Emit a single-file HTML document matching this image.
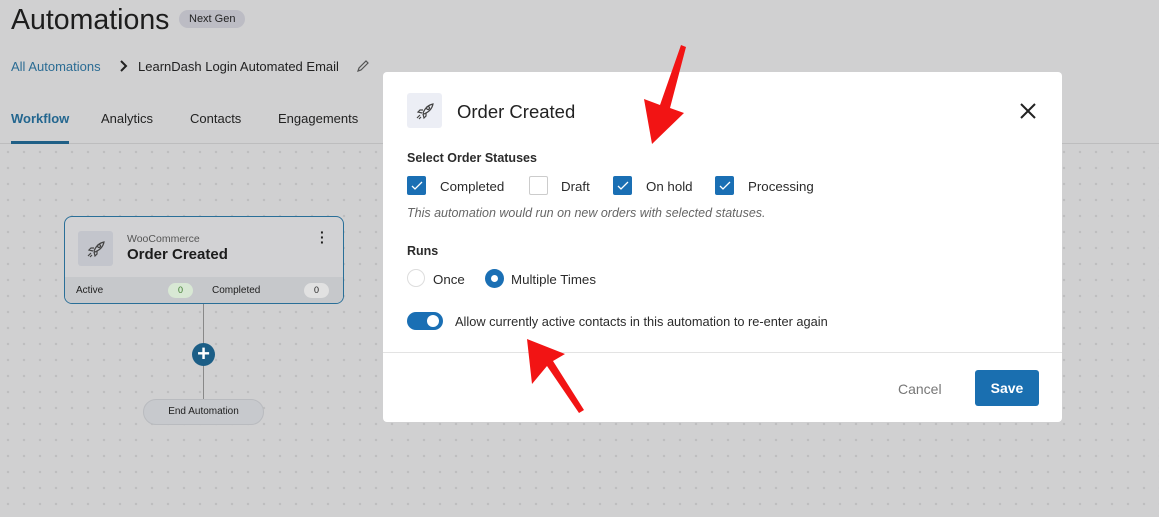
<!DOCTYPE html>
<html><head><meta charset="utf-8"><style>
*{box-sizing:border-box;margin:0;padding:0}
body{width:1159px;height:517px;overflow:hidden;font-family:"Liberation Sans",sans-serif;background:#d0d0d1;position:relative;color:#1e1e1e}
.canvas{position:absolute;left:0;top:144px;width:1159px;height:373px;background-color:#d0d0d1;background-image:radial-gradient(#bdbdbe 1px,transparent 1.4px);background-size:16px 16px}
h1{position:absolute;left:11px;top:4px;font-size:28.5px;font-weight:400;color:#1d1d1d}
.badge{position:absolute;left:179px;top:10px;background:#bcbcc4;border-radius:10px;font-size:11px;padding:3px 10px;color:#222}
.crumb{position:absolute;top:59px;font-size:13px}
.tabs{position:absolute;top:111px;font-size:13px;color:#222}
.line{position:absolute;left:0;top:143px;width:1159px;height:1px;background:#bdbdbe}
.node{position:absolute;left:64px;top:216px;width:280px;height:88px;border:1.5px solid #2a6f98;border-radius:8px;background:#d2d2d4;overflow:hidden}
.icon{position:absolute;background:#c3c5cc;border-radius:3px;display:flex;align-items:center;justify-content:center}
.foot{position:absolute;left:0;top:60px;width:280px;height:28px;background:#c6c8cb;font-size:10px}
.pill{position:absolute;background:#e1e1e1;border-radius:8px;font-size:9px;text-align:center}
.modal{position:absolute;left:383px;top:72px;width:679px;height:350px;background:#fff;border-radius:4px}
.cb{position:absolute;top:104px;width:19px;height:19px;border-radius:2px;background:#1a6fb4;display:flex;align-items:center;justify-content:center}
.cb.off{background:#fff;border:1px solid #ccc}
.lbl{position:absolute;font-size:13.3px;color:#2b2b2b}
</style></head><body>
<div class="canvas"></div>
<h1>Automations</h1>
<div class="badge">Next Gen</div>
<div class="crumb" style="left:11px;color:#2b6c94">All Automations</div>
<svg style="position:absolute;left:119px;top:60px" width="10" height="12"><path d="M2 1l5 5-5 5" stroke="#222" stroke-width="2" fill="none"/></svg>
<div class="crumb" style="left:138px;color:#222">LearnDash Login Automated Email</div>
<svg style="position:absolute;left:356px;top:59px" width="14" height="14" viewBox="0 0 14 14"><path d="M2 12l1-3 7-7 2 2-7 7z" fill="none" stroke="#555" stroke-width="1.2"/></svg>
<div class="tabs" style="left:11px;color:#23668f;font-weight:700">Workflow</div>
<div class="tabs" style="left:101px">Analytics</div>
<div class="tabs" style="left:190px">Contacts</div>
<div class="tabs" style="left:278px">Engagements</div>
<div class="line"></div>
<div style="position:absolute;left:11px;top:141px;width:58px;height:3px;background:#1f5f86"></div>

<div class="node">
 <div class="icon" style="left:13px;top:14px;width:35px;height:35px"><svg width="20" height="20" viewBox="0 0 20 20" fill="none" stroke="#444" stroke-width="1.2"><path d="M8 12c2-5 5-8 10-9-1 5-4 8-9 10z"/><circle cx="13" cy="7" r="1.5"/><path d="M8 9H5l-2 2 4 1M11 12v3l-2 2-1-4M5 14l-3 3M6 16l-2 2"/></svg></div>
 <div style="position:absolute;left:62px;top:16px;font-size:10.5px;color:#555">WooCommerce</div>
 <div style="position:absolute;left:62px;top:29px;font-size:15px;font-weight:700;color:#1c1c1c">Order Created</div>
 <div style="position:absolute;left:255px;top:13px;font-size:14px;font-weight:700;line-height:5px">·<br>·<br>·</div>
 <div class="foot"><span style="position:absolute;left:11px;top:8px">Active</span><div class="pill" style="left:103px;top:6px;width:25px;height:15px;line-height:15px;background:#d8e8d4;color:#3a7a2a">0</div><span style="position:absolute;left:147px;top:8px">Completed</span><div class="pill" style="left:239px;top:6px;width:25px;height:15px;line-height:15px">0</div></div>
</div>
<div style="position:absolute;left:203px;top:304px;width:1px;height:96px;background:#888"></div>
<div style="position:absolute;left:192px;top:343px;width:23px;height:23px;border-radius:50%;background:#1c5e86;color:#fff;font-size:22px;line-height:22px;text-align:center;font-weight:700">+</div>
<div style="position:absolute;left:143px;top:399px;width:121px;height:26px;border-radius:13px;background:#c7c9cd;border:1px solid #b9bbbf;font-size:10px;text-align:center;line-height:24px">End Automation</div>

<div class="modal">
 <div class="icon" style="left:24px;top:21px;width:35px;height:35px;background:#eceef5"><svg width="20" height="20" viewBox="0 0 20 20" fill="none" stroke="#444" stroke-width="1.2"><path d="M8 12c2-5 5-8 10-9-1 5-4 8-9 10z"/><circle cx="13" cy="7" r="1.5"/><path d="M8 9H5l-2 2 4 1M11 12v3l-2 2-1-4M5 14l-3 3M6 16l-2 2"/></svg></div>
 <div style="position:absolute;left:74px;top:29px;font-size:18.5px;color:#222">Order Created</div>
 <svg style="position:absolute;left:636px;top:30px" width="18" height="18" viewBox="0 0 18 18"><path d="M2 2l14 14M16 2L2 16" stroke="#222" stroke-width="2"/></svg>
 <div class="lbl" style="left:24px;top:79px;font-weight:700;font-size:12.5px">Select Order Statuses</div>
 <div class="cb" style="left:24px"><svg width="12" height="10"><path d="M1 5l3 3 7-7" stroke="#fff" fill="none" stroke-width="1.3"/></svg></div>
 <div class="lbl" style="left:57px;top:107px">Completed</div>
 <div class="cb off" style="left:146px"></div>
 <div class="lbl" style="left:178px;top:107px">Draft</div>
 <div class="cb" style="left:230px"><svg width="12" height="10"><path d="M1 5l3 3 7-7" stroke="#fff" fill="none" stroke-width="1.3"/></svg></div>
 <div class="lbl" style="left:263px;top:107px">On hold</div>
 <div class="cb" style="left:332px"><svg width="12" height="10"><path d="M1 5l3 3 7-7" stroke="#fff" fill="none" stroke-width="1.3"/></svg></div>
 <div class="lbl" style="left:365px;top:107px">Processing</div>
 <div class="lbl" style="left:24px;top:134px;font-style:italic;font-size:12.5px;color:#666">This automation would run on new orders with selected statuses.</div>
 <div class="lbl" style="left:24px;top:172px;font-weight:700;font-size:12.5px">Runs</div>
 <div style="position:absolute;left:24px;top:197px;width:18px;height:18px;border-radius:50%;border:1px solid #ddd"></div>
 <div class="lbl" style="left:50px;top:200px">Once</div>
 <div style="position:absolute;left:102px;top:197px;width:19px;height:19px;border-radius:50%;background:#1a6fb4"><div style="position:absolute;left:6px;top:6px;width:7px;height:7px;border-radius:50%;background:#fff"></div></div>
 <div class="lbl" style="left:128px;top:200px">Multiple Times</div>
 <div style="position:absolute;left:24px;top:240px;width:36px;height:18px;border-radius:9px;background:#1a6fb4"><div style="position:absolute;left:20px;top:3px;width:12px;height:12px;border-radius:50%;background:#fff"></div></div>
 <div class="lbl" style="left:72px;top:242px;font-size:12.8px">Allow currently active contacts in this automation to re-enter again</div>
 <div style="position:absolute;left:0;top:280px;width:679px;height:1px;background:#e3e3e3"></div>
 <div class="lbl" style="left:515px;top:309px;color:#777;font-size:14px">Cancel</div>
 <div style="position:absolute;left:592px;top:298px;width:64px;height:36px;background:#1a6fb0;border-radius:3px;color:#fff;font-size:14px;font-weight:700;text-align:center;line-height:36px">Save</div>
</div>
<svg style="position:absolute;left:0;top:0" width="1159" height="517">
<polygon points="681,45 686,47 670,108 684,113 652,144 644,99 660,105" fill="#f21414"/>
<polygon points="527,339 565,354 553,361 584,410 579,413 547,366 532,384" fill="#f21414"/>
</svg>
</body></html>
